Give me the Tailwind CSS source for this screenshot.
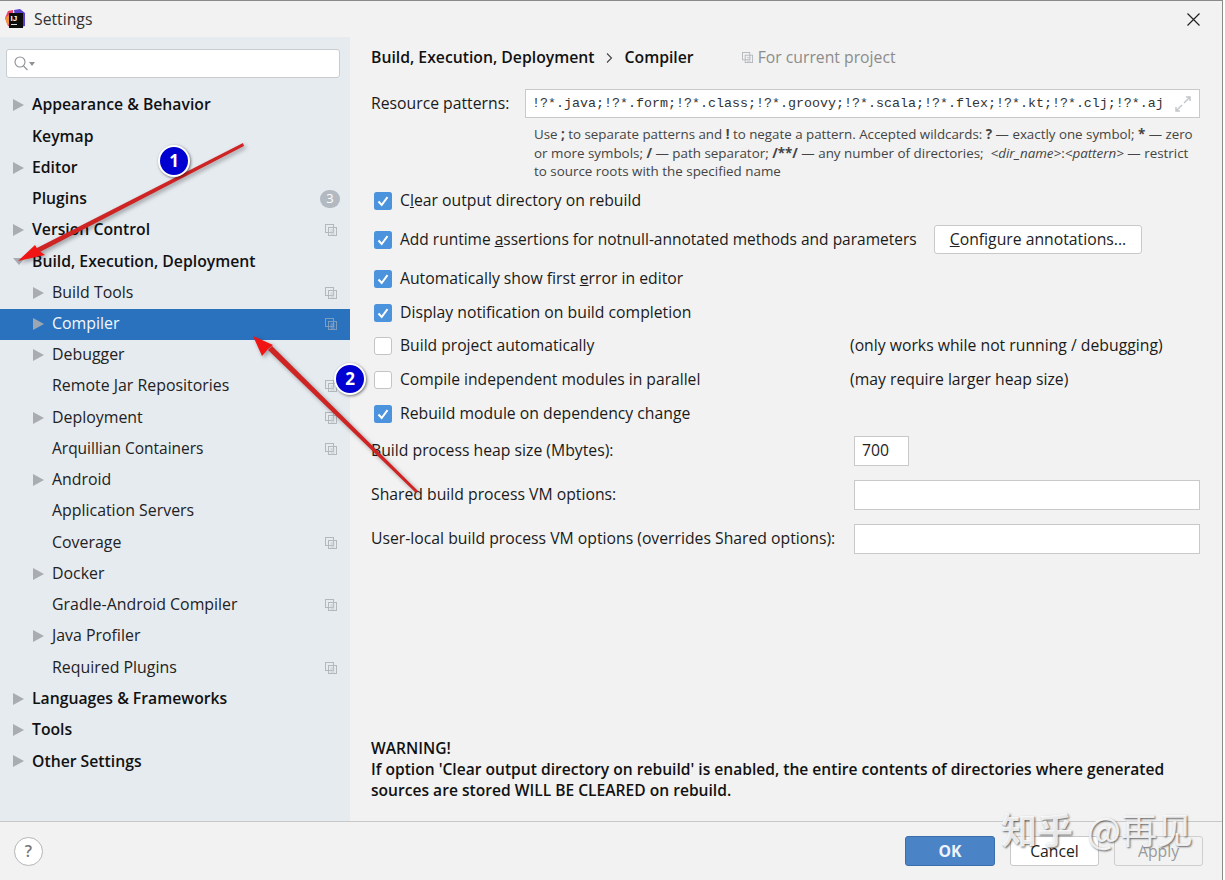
<!DOCTYPE html>
<html lang="en"><head><meta charset="utf-8"><title>Settings</title>
<script src="https://cdn.jsdelivr.net/npm/@tailwindcss/browser@4"></script></head>
<body class="bg-white">
<div class="relative w-[1225px] h-[880px] overflow-hidden font-['Open_Sans','Noto_Sans',sans-serif] text-[15.75px] text-[#1a1a1a]">
<svg width="0" height="0" class="absolute"><defs>
<symbol id="tri" viewBox="0 0 11 12"><path d="M0 0L11 6L0 12Z" fill="#a9adb2"/></symbol>
<symbol id="copy" viewBox="0 0 12 12"><g fill="none" stroke="#b3b8bd"><rect x="0.5" y="0.5" width="8" height="8"/><rect x="3.5" y="3.5" width="8" height="8"/><path d="M5.5 6h4M5.5 8h4M5.5 10h4" stroke="#c3c7cb"/></g></symbol>
<symbol id="check" viewBox="0 0 18 18"><rect width="18" height="18" rx="2.5" fill="#4b93dc"/><path d="M4.5 9.5L7.7 13L13.5 5.2" fill="none" stroke="#fff" stroke-width="2"/></symbol>
</defs></svg>

<div class="w-[1223px] h-full bg-[#f2f2f2] border-t border-r border-[#8a8a8a] flex flex-col">
  <div class="h-[36px] shrink-0 flex items-center relative">
    <svg class="ml-[5px] mt-[1px]" width="20" height="21" viewBox="0 0 20 21"><path d="M0 9L3 2L8 1L8 18L3 17Z" fill="#e8446a"/><path d="M0 9L4 6L6 16L2 15Z" fill="#f0933a"/><path d="M9 1L15 0L20 4L20 17L12 19Z" fill="#5b3fd0"/><rect x="4" y="4" width="14" height="15" fill="#0c0c0c"/><text x="5.5" y="12" font-size="8" font-weight="700" fill="#fff" font-family="Liberation Sans">IJ</text><rect x="6" y="15" width="6" height="1" fill="#ddd"/></svg>
    <span class="ml-[9px] mt-[2px] text-[#333]">Settings</span>
    <svg class="absolute left-[1187px] top-[12px]" width="13" height="13" viewBox="0 0 13 13"><path d="M0.5 0.5L12.5 12.5M12.5 0.5L0.5 12.5" stroke="#222" stroke-width="1.2"/></svg>
  </div>
  <div class="flex h-[784px] shrink-0">
    <aside class="w-[350px] shrink-0 bg-[#e6ebf0] pt-[12px]">
      <div class="mx-[6px] w-[334px] h-[29px] bg-white border border-[#c9cccf] rounded-[3px] flex items-center pl-[7px] gap-[1px]">
        <svg width="14" height="15" viewBox="0 0 14 15" fill="none" stroke="#8d9094" stroke-width="1.1"><circle cx="6" cy="6" r="5"/><path d="M9.5 10L13.5 14"/></svg>
        <svg width="6" height="4" viewBox="0 0 6 4" class="mt-[1px]"><path d="M0 0H6L3 4Z" fill="#8d9094"/></svg>
      </div>
      <nav class="mt-[12px] flex flex-col font-semibold text-[#111] [&>div]:pb-[1px]">
        <div class="h-[31.25px] flex items-center pl-[13px]"><svg class="w-[11px] h-[12px] mr-[8px]"><use href="#tri"/></svg><span>Appearance &amp; Behavior</span></div>
        <div class="h-[31.25px] flex items-center pl-[32px]">Keymap</div>
        <div class="h-[31.25px] flex items-center pl-[13px]"><svg class="w-[11px] h-[12px] mr-[8px]"><use href="#tri"/></svg><span>Editor</span></div>
        <div class="h-[31.25px] flex items-center justify-between pl-[32px] pr-[10px]"><span>Plugins</span><span class="w-[20px] h-[18px] rounded-full bg-[#b2b9c0] text-white text-[13px] font-normal flex items-center justify-center">3</span></div>
        <div class="h-[31.25px] flex items-center pl-[13px] pr-[13px]"><svg class="w-[11px] h-[12px] mr-[8px]"><use href="#tri"/></svg><span class="flex-1">Version Control</span><svg class="w-[12px] h-[12px]"><use href="#copy"/></svg></div>
        <div class="h-[31.25px] flex items-center pl-[13px]"><svg class="w-[12px] h-[7px] mr-[7px]" viewBox="0 0 12 7"><path d="M0 0H12L6 7Z" fill="#a9adb2"/></svg><span>Build, Execution, Deployment</span></div>
        <section class="font-normal text-[15.9px] text-[#222] flex flex-col [&>div]:pb-[1px]">
          <div class="h-[31.25px] flex items-center pl-[33px] pr-[13px]"><svg class="w-[11px] h-[12px] mr-[8px]"><use href="#tri"/></svg><span class="flex-1">Build Tools</span><svg class="w-[12px] h-[12px]"><use href="#copy"/></svg></div>
          <div class="h-[31.25px] flex items-center pl-[33px] pr-[13px] bg-[#2a72bd] text-[#f4f8fc]"><svg class="w-[11px] h-[12px] mr-[8px] opacity-90"><use href="#tri"/></svg><span class="flex-1">Compiler</span><svg class="w-[12px] h-[12px] opacity-60"><use href="#copy"/></svg></div>
          <div class="h-[31.25px] flex items-center pl-[33px]"><svg class="w-[11px] h-[12px] mr-[8px]"><use href="#tri"/></svg><span>Debugger</span></div>
          <div class="h-[31.25px] flex items-center pl-[52px] pr-[13px]"><span class="flex-1">Remote Jar Repositories</span><svg class="w-[12px] h-[12px]"><use href="#copy"/></svg></div>
          <div class="h-[31.25px] flex items-center pl-[33px] pr-[13px]"><svg class="w-[11px] h-[12px] mr-[8px]"><use href="#tri"/></svg><span class="flex-1">Deployment</span><svg class="w-[12px] h-[12px]"><use href="#copy"/></svg></div>
          <div class="h-[31.25px] flex items-center pl-[52px] pr-[13px]"><span class="flex-1 text-[15.5px]">Arquillian Containers</span><svg class="w-[12px] h-[12px]"><use href="#copy"/></svg></div>
          <div class="h-[31.25px] flex items-center pl-[33px]"><svg class="w-[11px] h-[12px] mr-[8px]"><use href="#tri"/></svg><span>Android</span></div>
          <div class="h-[31.25px] flex items-center pl-[52px]">Application Servers</div>
          <div class="h-[31.25px] flex items-center pl-[52px] pr-[13px]"><span class="flex-1">Coverage</span><svg class="w-[12px] h-[12px]"><use href="#copy"/></svg></div>
          <div class="h-[31.25px] flex items-center pl-[33px]"><svg class="w-[11px] h-[12px] mr-[8px]"><use href="#tri"/></svg><span>Docker</span></div>
          <div class="h-[31.25px] flex items-center pl-[52px] pr-[13px]"><span class="flex-1">Gradle-Android Compiler</span><svg class="w-[12px] h-[12px]"><use href="#copy"/></svg></div>
          <div class="h-[31.25px] flex items-center pl-[33px]"><svg class="w-[11px] h-[12px] mr-[8px]"><use href="#tri"/></svg><span>Java Profiler</span></div>
          <div class="h-[31.25px] flex items-center pl-[52px] pr-[13px]"><span class="flex-1">Required Plugins</span><svg class="w-[12px] h-[12px]"><use href="#copy"/></svg></div>
        </section>
        <div class="h-[31.25px] flex items-center pl-[13px]"><svg class="w-[11px] h-[12px] mr-[8px]"><use href="#tri"/></svg><span>Languages &amp; Frameworks</span></div>
        <div class="h-[31.25px] flex items-center pl-[13px]"><svg class="w-[11px] h-[12px] mr-[8px]"><use href="#tri"/></svg><span>Tools</span></div>
        <div class="h-[31.25px] flex items-center pl-[13px]"><svg class="w-[11px] h-[12px] mr-[8px]"><use href="#tri"/></svg><span>Other Settings</span></div>
      </nav>
    </aside>
    <main class="flex-1 pl-[21px] pr-[23px] flex flex-col">
      <div class="h-[41px] flex items-center shrink-0 font-semibold text-[#111]">
        <span>Build, Execution, Deployment</span>
        <svg class="mx-[11.5px]" width="7" height="10" viewBox="0 0 7 10" fill="none" stroke="#444" stroke-width="1.1"><path d="M1 0.5L5.5 5L1 9.5"/></svg>
        <span>Compiler</span>
        <svg class="ml-[48px] mr-[5px] w-[11px] h-[11px]"><use href="#copy"/></svg>
        <span class="font-normal text-[#8c8c8c]">For current project</span>
      </div>
      <div class="mt-[11px] flex items-center h-[29px]">
        <span class="w-[154px]">Resource patterns:</span>
        <div class="w-[675px] h-[29px] bg-white border border-[#c9c9c9] flex items-center pl-[6px] pr-[8px] justify-between font-['Liberation_Mono',monospace] text-[13.33px] text-[#333]">
          <span>!?*.java;!?*.form;!?*.class;!?*.groovy;!?*.scala;!?*.flex;!?*.kt;!?*.clj;!?*.aj</span>
          <svg width="16" height="16" viewBox="0 0 16 16" fill="none" stroke="#c4c8cc" stroke-width="1.5"><path d="M9 7L15 1M11 1H15V5M7 9L1 15M1 11V15H5"/></svg>
        </div>
      </div>
      <div class="ml-[163px] mt-[7px] text-[13.4px] leading-[18.5px] text-[#444] whitespace-nowrap">
        <div class="text-[13.33px]">Use <b>;</b> to separate patterns and <b>!</b> to negate a pattern. Accepted wildcards: <b>?</b> — exactly one symbol; <b>*</b> — zero</div>
        <div>or more symbols; <b>/</b> — path separator; <b>/**/</b> — any number of directories; &nbsp;<i>&lt;dir_name&gt;</i>:<i>&lt;pattern&gt;</i> — restrict</div>
        <div>to source roots with the specified name</div>
      </div>
      <div class="mt-[3px] h-[34px] flex items-center pl-[3px]"><svg class="w-[18px] h-[18px] mr-[8px]"><use href="#check"/></svg><span>C<u>l</u>ear output directory on rebuild</span></div>
      <div class="mt-[5px] h-[34px] flex items-center pl-[3px]"><svg class="w-[18px] h-[18px] mr-[8px]"><use href="#check"/></svg><span class="w-[534px] text-[15.5px]">Add runtime <u>a</u>ssertions for notnull-annotated methods and parameters</span><button class="w-[208px] h-[29px] bg-white border border-[#c9c9c9] rounded-[3px] text-[#222]"><u>C</u>onfigure annotations...</button></div>
      <div class="mt-[5px] h-[34px] flex items-center pl-[3px]"><svg class="w-[18px] h-[18px] mr-[8px]"><use href="#check"/></svg><span>Automatically show first <u>e</u>rror in editor</span></div>
      <div class="mt-[1px] h-[32px] flex items-center pl-[3px]"><svg class="w-[18px] h-[18px] mr-[8px]"><use href="#check"/></svg><span>Display notification on build completion</span></div>
      <div class="h-[34px] flex items-center pl-[3px]"><span class="w-[18px] h-[18px] mr-[8px] bg-white border border-[#c4c4c4] rounded-[3px]"></span><span class="w-[450px] text-[15.65px]">Build project automatically</span><span>(only works while not running / debugging)</span></div>
      <div class="h-[34px] flex items-center pl-[3px]"><span class="w-[18px] h-[18px] mr-[8px] bg-white border border-[#c4c4c4] rounded-[3px]"></span><span class="w-[450px] text-[15.65px]">Compile independent modules in parallel</span><span>(may require larger heap size)</span></div>
      <div class="h-[34px] flex items-center pl-[3px]"><svg class="w-[18px] h-[18px] mr-[8px]"><use href="#check"/></svg><span>Rebuild module on dependency change</span></div>
      <div class="mt-[5px] h-[30px] flex items-center"><span class="w-[483px]">Build process heap size (Mbytes):</span><div class="w-[55px] h-[30px] bg-white border border-[#c9c9c9] flex items-center pl-[7px] text-[#222]">700</div></div>
      <div class="mt-[14px] h-[30px] flex items-center"><span class="w-[483px]">Shared build process VM options:</span><div class="w-[346px] h-[30px] bg-white border border-[#c9c9c9]"></div></div>
      <div class="mt-[14px] h-[30px] flex items-center"><span class="w-[483px]">User-local build process VM options (overrides Shared options):</span><div class="w-[346px] h-[30px] bg-white border border-[#c9c9c9]"></div></div>
      <div class="mt-auto mb-[20px] font-semibold text-[15.6px] text-[#111] leading-[21px] whitespace-nowrap">
        <div>WARNING!</div>
        <div>If option 'Clear output directory on rebuild' is enabled, the entire contents of directories where generated</div>
        <div>sources are stored WILL BE CLEARED on rebuild.</div>
      </div>
    </main>
  </div>
  <footer class="flex-1 border-t border-[#c8c8c8] flex items-center pl-[14px] pr-[19px]">
    <span class="w-[29px] h-[29px] rounded-full bg-white border border-[#b5b5b5] flex items-center justify-center text-[#777] font-semibold text-[16px]">?</span>
    <div class="ml-auto flex gap-[15px]">
      <button class="w-[90px] h-[30px] pt-[2px] bg-[#4a83c6] border border-[#3a6fae] rounded-[3px] text-[#eef4fb] font-bold">OK</button>
      <button class="w-[89px] h-[30px] pt-[2px] bg-white border border-[#c9c9c9] rounded-[3px] text-[#222]">Cancel</button>
      <button class="w-[89px] h-[30px] pt-[2px] bg-[#f2f2f2] border border-[#cfcfcf] rounded-[3px] text-[#9a9a9a]">Apply</button>
    </div>
  </footer>
</div>

<svg class="absolute inset-0 pointer-events-none drop-shadow-[2px_2px_2px_rgba(0,0,0,0.35)]" width="1225" height="880" viewBox="0 0 1225 880">
  <path d="M243 143L244 146L36 254L33 250Z" fill="#cf2424"/>
  <path d="M18 261L35 245L38 250L45 255Z" fill="#f01414"/>
  <path d="M418 491L416 493L268 350L272 346Z" fill="#cf2424"/>
  <path d="M253 336L273 345L268 349L262 356Z" fill="#f01414"/>
</svg>
<div class="absolute left-[158px] top-[145px] w-[32px] h-[32px] rounded-full bg-[#0000d0] border-[2.5px] border-white shadow-[1px_1px_3px_rgba(0,0,0,0.5)] flex items-center justify-center text-white font-bold text-[17px]">1</div>
<div class="absolute left-[334px] top-[363px] w-[32px] h-[32px] rounded-full bg-[#0000d0] border-[2.5px] border-white shadow-[1px_1px_3px_rgba(0,0,0,0.5)] flex items-center justify-center text-white font-bold text-[17px]">2</div>
<div class="absolute left-[1001px] top-[803px] flex items-center whitespace-nowrap font-['Noto_Sans_CJK_SC',sans-serif] font-bold text-[36px] leading-[50px] text-white/85 [text-shadow:1px_1px_2px_rgba(0,0,0,0.6)]">知乎<span class="ml-[14px] font-normal">@再见</span></div>
</div>
</body></html>
